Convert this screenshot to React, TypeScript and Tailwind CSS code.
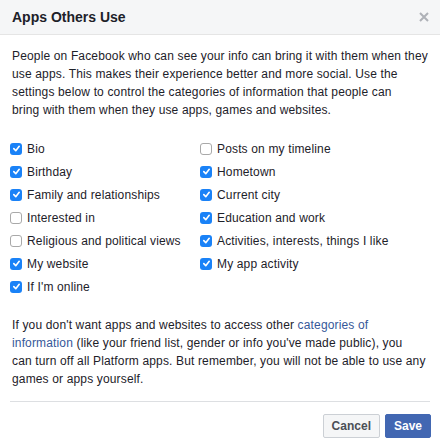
import React from "react";

type Item = { label: string; checked: boolean };

const leftItems: Item[] = [
  { label: "Bio", checked: true },
  { label: "Birthday", checked: true },
  { label: "Family and relationships", checked: true },
  { label: "Interested in", checked: false },
  { label: "Religious and political views", checked: false },
  { label: "My website", checked: true },
  { label: "If I'm online", checked: true },
];

const rightItems: Item[] = [
  { label: "Posts on my timeline", checked: false },
  { label: "Hometown", checked: true },
  { label: "Current city", checked: true },
  { label: "Education and work", checked: true },
  { label: "Activities, interests, things I like", checked: true },
  { label: "My app activity", checked: true },
];

function Box({ checked }: { checked: boolean }) {
  if (checked) {
    return (
      <span className="flex h-[12px] w-[12px] shrink-0 items-center justify-center rounded-[3px] bg-[#1a82f7]">
        <svg width="9" height="9" viewBox="0 0 10 10" fill="none">
          <path d="M2 5.2 L4.2 7.4 L8 2.6" stroke="white" strokeWidth="1.8" strokeLinecap="round" strokeLinejoin="round" />
        </svg>
      </span>
    );
  }
  return <span className="h-[12px] w-[12px] shrink-0 rounded-[3px] border border-[#a9a9a9] bg-white" />;
}

function Row({ item }: { item: Item }) {
  return (
    <label className="flex h-[23px] items-center gap-[5px]">
      <Box checked={item.checked} />
      <span>{item.label}</span>
    </label>
  );
}

export default function App() {
  return (
    <div className="h-[447px] w-[440px] bg-white font-['Liberation_Sans',Arial,sans-serif] text-[12px] leading-[18px] tracking-[0.15px] text-[#1d2129]">
      <div className="flex h-[35px] items-center justify-between border-b border-[#e5e5e5] bg-[#f5f6f7] pl-3 pr-[12px]">
        <h1 className="text-[14px] font-bold tracking-normal text-[#1d2129]">Apps Others Use</h1>
        <svg width="10" height="10" viewBox="0 0 10 10" className="mr-[-1px]">
          <path d="M1 1 L9 9 M9 1 L1 9" stroke="#aeb1b7" strokeWidth="2" />
        </svg>
      </div>

      <div className="px-3 pt-[12px]">
        <p>
          People on Facebook who can see your info can bring it with them when they
          <br />
          use apps. This makes their experience better and more social. Use the
          <br />
          settings below to control the categories of information that people can
          <br />
          bring with them when they use apps, games and websites.
        </p>
      </div>

      <div className="mt-[18px] grid grid-cols-[190px_1fr] px-[10px]">
        <div className="flex flex-col">
          {leftItems.map((it) => (
            <Row key={it.label} item={it} />
          ))}
        </div>
        <div className="flex flex-col">
          {rightItems.map((it) => (
            <Row key={it.label} item={it} />
          ))}
        </div>
      </div>

      <div className="px-3 pt-[18px]">
        <p>
          If you don't want apps and websites to access other{" "}
          <a href="#" className="text-[#365899]">
            categories of
            <br />
            information
          </a>{" "}
          (like your friend list, gender or info you've made public), you
          <br />
          can turn off all Platform apps. But remember, you will not be able to use any
          <br />
          games or apps yourself.
        </p>
      </div>

      <div className="mx-[10px] mt-[13px] border-t border-[#dddfe2]" />

      <div className="flex justify-end gap-[5px] pr-[9px] pt-[12px]">
        <button className="h-[24px] rounded-[2px] border border-[#ccd0d5] bg-[#f5f6f7] px-[8px] text-[12px] font-bold tracking-normal text-[#4b4f56]">
          Cancel
        </button>
        <button className="h-[24px] rounded-[2px] border border-[#4267b2] bg-[#4267b2] px-[8px] text-[12px] font-bold tracking-normal text-white">
          Save
        </button>
      </div>
    </div>
  );
}
